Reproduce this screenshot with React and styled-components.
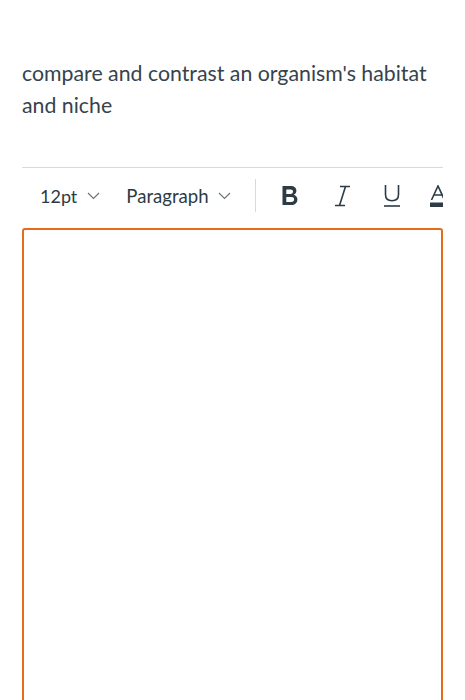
import React from "react";
import styled, { createGlobalStyle } from "styled-components";

const GlobalStyle = createGlobalStyle`
  body {
    margin: 0;
    background: #ffffff;
    font-family: Lato, "Liberation Sans", sans-serif;
    color: #2d3b45;
  }
`;

const Page = styled.div`
  width: 421px;
  padding: 57px 0 0 22px;
  height: 643px;
  overflow: hidden;
`;

const Question = styled.p`
  margin: 0;
  font-size: 21.3px;
  line-height: 32px;
  color: #36434d;
`;

const Editor = styled.div`
  margin-top: 46px;
  border-top: 1px solid #d7dadd;
`;

const Toolbar = styled.div`
  display: flex;
  align-items: center;
  height: 55px;
  padding: 0 0 3px 18px;
  overflow: hidden;
  white-space: nowrap;
`;

const Dropdown = styled.button`
  display: flex;
  align-items: center;
  gap: ${(p) => p.gap || 10}px;
  margin-right: ${(p) => p.space || 0}px;
  background: none;
  border: none;
  padding: 0;
  font-family: inherit;
  font-size: ${(p) => p.size || 18}px;
  color: #2d3b45;
`;

const Separator = styled.span`
  width: 1px;
  height: 33px;
  background: #d7dadd;
  margin: 0 25px 0 24px;
  flex-shrink: 0;
`;

const IconButton = styled.span`
  display: flex;
  align-items: center;
  justify-content: center;
  height: 24px;
  margin-right: ${(p) => p.space || 0}px;
  flex-shrink: 0;
`;

const Area = styled.div`
  height: 600px;
  margin-top: 2px;
  border: 2px solid #e66b1e;
  border-radius: 3px;
  box-sizing: border-box;
`;

function Chevron() {
  return (
    <svg width="13" height="8" viewBox="0 0 13 8">
      <path d="M1 1l5.5 5.5L12 1" fill="none" stroke="#6b7780" strokeWidth="1.2" />
    </svg>
  );
}

export default function App() {
  return (
    <>
      <GlobalStyle />
      <Page>
        <Question>compare and contrast an organism's habitat and niche</Question>
        <Editor>
          <Toolbar>
            <Dropdown space={26}>
              12pt <Chevron />
            </Dropdown>
            <Dropdown size={18.6} gap={9}>
              Paragraph <Chevron />
            </Dropdown>
            <Separator />
            <IconButton space={34}>
              <svg width="19" height="22" viewBox="0 0 19 22">
                <path
                  d="M1.5 1h8.3c3.4 0 5.6 1.8 5.6 4.8 0 1.9-1 3.3-2.6 3.9 2.2.6 3.6 2.3 3.6 4.7 0 3.3-2.5 5.6-6.2 5.6H1.5z M5.3 4.4v4.5h4.3c1.6 0 2.4-.9 2.4-2.3S11.2 4.4 9.6 4.4z M5.3 12.1v4.9h5c1.8 0 2.8-.9 2.8-2.5s-1-2.4-2.8-2.4z"
                  fill="#2d3b45"
                  fillRule="evenodd"
                />
              </svg>
            </IconButton>
            <IconButton space={31}>
              <svg width="17" height="22" viewBox="0 0 17 22">
                <path d="M6 1.5h10M1 20.5h10M11.5 1.5L5.5 20.5" fill="none" stroke="#2d3b45" strokeWidth="1.6" />
              </svg>
            </IconButton>
            <IconButton space={28}>
              <svg width="20" height="22" viewBox="0 0 20 22">
                <path d="M3.5 0v9.5c0 4 2.6 6.2 6.5 6.2s6.5-2.2 6.5-6.2V0" fill="none" stroke="#2d3b45" strokeWidth="1.6" />
                <path d="M2 21h16" stroke="#2d3b45" strokeWidth="1.6" />
              </svg>
            </IconButton>
            <IconButton>
              <svg width="18" height="22" viewBox="0 0 18 22">
                <path d="M1.5 15L8 1l6.5 14M4 10h8" fill="none" stroke="#2d3b45" strokeWidth="1.6" />
                <rect x="0" y="17.5" width="18" height="4.5" fill="#2d3b45" />
              </svg>
            </IconButton>
          </Toolbar>
          <Area />
        </Editor>
      </Page>
    </>
  );
}
